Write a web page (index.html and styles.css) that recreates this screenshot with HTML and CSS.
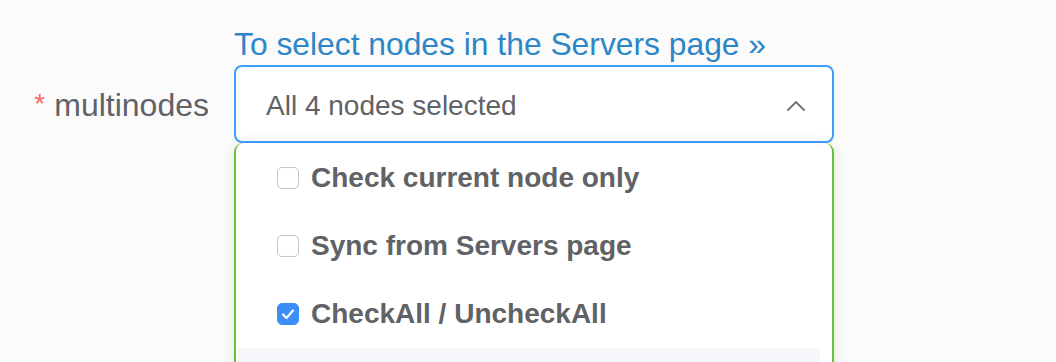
FILE: index.html
```html
<!DOCTYPE html>
<html>
<head>
<meta charset="utf-8">
<link rel="stylesheet" href="styles.css">
</head>
<body>
<div class="form">
  <div class="cell"></div>
  <div class="link-line"><a class="link" href="#">To select nodes in the Servers page »</a></div>

  <label class="label"><span class="req">*</span>multinodes</label>
  <div class="select">
    <span class="select-text">All 4 nodes selected</span>
    <svg class="chevron" width="20" height="12" viewBox="0 0 20 12"><polyline points="1.5,10.5 10,2 18.5,10.5" fill="none" stroke="#6b6e73" stroke-width="1.8"/></svg>
  </div>

  <div class="cell"></div>
  <div class="panel">
    <ul class="list">
      <li class="item"><span class="box"></span><span class="item-text">Check current node only</span></li>
      <li class="item"><span class="box"></span><span class="item-text">Sync from Servers page</span></li>
      <li class="item"><span class="box checked"><svg width="22" height="22" viewBox="0 0 22 22"><polyline points="6,11.5 9.5,15 16,7.5" fill="none" stroke="#fff" stroke-width="2.2" stroke-linecap="round" stroke-linejoin="round"/></svg></span><span class="item-text">CheckAll / UncheckAll</span></li>
      <li class="item hover"></li>
    </ul>
  </div>
</div>
</body>
</html>
```
FILE: styles.css
```css
html, body {
  margin: 0;
  padding: 0;
  background: #fbfbfb;
  font-family: "Liberation Sans", Helvetica, Arial, sans-serif;
  overflow: hidden;
}
.form {
  display: grid;
  grid-template-columns: 234px 600px;
  grid-template-rows: 38px 78px auto;
  padding-top: 27px;
}
.link-line {
  height: 38px;
  line-height: 34px;
}
.link {
  color: #2c86c8;
  font-size: 31.8px;
  text-decoration: none;
  white-space: nowrap;
}
.label {
  box-sizing: border-box;
  height: 78px;
  padding-right: 25px;
  padding-top: 3px;
  text-align: right;
  font-size: 32px;
  line-height: 75px;
  color: #606266;
  white-space: nowrap;
}
.req {
  color: #f56c6c;
  font-size: 28px;
  position: relative;
  top: -3px;
  margin-right: 9px;
}
.select {
  box-sizing: border-box;
  height: 78px;
  border: 2px solid #409eff;
  border-radius: 8px;
  background: #fff;
  display: flex;
  align-items: center;
  padding-left: 30px;
  padding-right: 26px;
  padding-top: 3px;
}
.select-text {
  flex: 1;
  font-size: 28px;
  color: #606266;
}
.chevron {
  display: block;
}
.panel {
  box-sizing: border-box;
  height: 230px;
  border: 2px solid #67c23a;
  border-top: none;
  border-radius: 9px 9px 0 0;
  background: #fff;
  box-shadow: 0 0 14px rgba(0, 0, 0, 0.09);
  padding-top: 1px;
  padding-right: 12px;
  overflow: hidden;
}
.list {
  list-style: none;
  margin: 0;
  padding: 0;
}
.item {
  height: 68px;
  display: flex;
  align-items: center;
  padding-left: 41px;
  gap: 12px;
}
.item.hover {
  background: #f5f7fa;
  margin-left: 2px;
  padding-left: 39px;
}
.box {
  box-sizing: border-box;
  width: 22px;
  height: 22px;
  border: 1.5px solid #c3c6cc;
  border-radius: 5px;
  background: #fff;
  flex: none;
}
.box.checked {
  background: #3a8ef6;
  border-color: #3a8ef6;
  position: relative;
}
.box.checked svg {
  position: absolute;
  left: -1.5px;
  top: -1.5px;
}
.item-text {
  font-size: 28px;
  font-weight: bold;
  color: #606266;
  white-space: nowrap;
}
```
